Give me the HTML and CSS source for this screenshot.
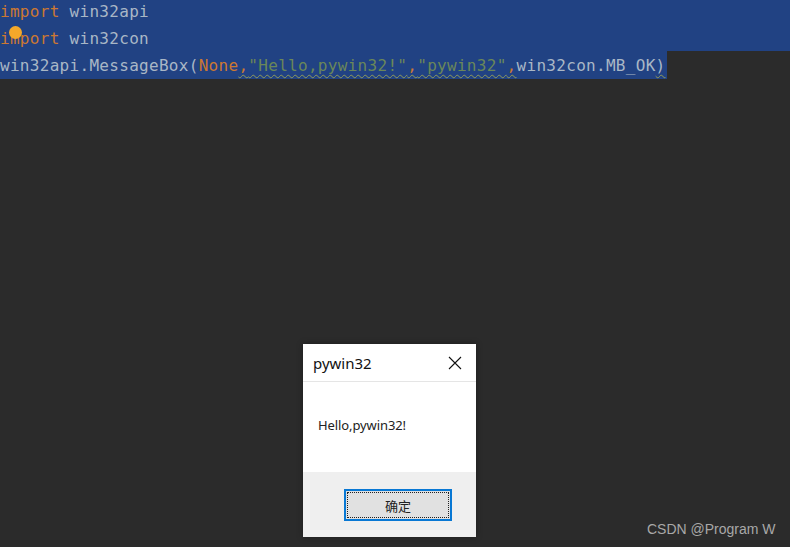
FILE: index.html
```html
<!DOCTYPE html>
<html lang="zh">
<head>
<meta charset="utf-8">
<title>pywin32</title>
<link rel="stylesheet" href="styles.css">
</head>
<body>
<main class="editor">
  <div class="line line-full"><span class="kw">import</span> win32api</div>
  <div class="line line-full line-second"><span class="kw">import</span> win32con<span class="bulb"></span></div>
  <div class="line line-fit"><span>win32api.MessageBox(</span><span class="kw">None</span><span class="kw warn">,</span><span class="str warn">"Hello,pywin32!"</span><span class="kw warn">,</span><span class="str warn">"pywin32"</span><span class="kw warn">,</span><span>win32con.MB_OK</span><span class="warn">)</span></div>
</main>
<section class="dialog">
  <header class="dialog-title">
    <span>pywin32</span>
    <svg class="close" width="14" height="14" viewBox="0 0 14 14"><path d="M1 1L13 13M13 1L1 13" stroke="#111" stroke-width="1.1" fill="none"/></svg>
  </header>
  <div class="dialog-body">Hello,pywin32!</div>
  <footer class="dialog-footer">
    <button class="ok" type="button"><span class="ok-inner">确定</span></button>
  </footer>
</section>
<div class="watermark">CSDN @Program W</div>
</body>
</html>
```
FILE: styles.css
```css
html, body {
  margin: 0;
  height: 100%;
  background: #2b2b2b;
  overflow: hidden;
}
.editor {
  font-family: "DejaVu Sans Mono", monospace;
  font-size: 16px;
  letter-spacing: 0.3px;
  color: #a9b7c6;
  padding-top: 0;
}
.line {
  height: 28px;
  line-height: 23px;
  background: #214283;
  white-space: pre;
  position: relative;
}
.line-full { height: 25.5px; }
.line-second { line-height: 26px; }
.line-fit { width: 667px; height: 28px; line-height: 29px; }
.kw { color: #cc7832; }
.str { color: #6a8759; }
.warn {
  text-decoration: underline wavy #8f9a5a 1px;
  text-underline-offset: 3px;
}
.bulb {
  position: absolute;
  left: 9px;
  top: 0;
  width: 13px;
  height: 13px;
  border-radius: 50%;
  background: #f4a82a;
}
.dialog {
  position: absolute;
  left: 303px;
  top: 344px;
  width: 173px;
  height: 193px;
  background: #fff;
  display: flex;
  flex-direction: column;
  font-family: "Noto Sans", "Noto Sans CJK SC", sans-serif;
  box-shadow: 0 0 6px rgba(0, 0, 0, 0.35);
}
.dialog-title {
  height: 38px;
  flex: none;
  box-sizing: border-box;
  border-bottom: 1px solid #e5e5e5;
  display: flex;
  align-items: center;
  justify-content: space-between;
  padding: 0 14px 0 10px;
  font-size: 15px;
  color: #111;
}
.dialog-body {
  flex: 1;
  padding: 34px 0 0 15px;
  font-size: 13px;
  line-height: 18px;
  letter-spacing: -0.1px;
  color: #222;
}
.dialog-footer {
  flex: none;
  height: 65px;
  background: #efefef;
  padding: 17px 0 0 41px;
  box-sizing: border-box;
}
.ok {
  display: block;
  width: 108px;
  height: 32px;
  padding: 1px;
  margin: 0;
  border: 2px solid #0878d4;
  background: #e1e1e1;
  box-sizing: border-box;
  font-family: "Noto Sans CJK SC", sans-serif;
  font-size: 13px;
  color: #222;
}
.ok-inner {
  display: flex;
  align-items: center;
  justify-content: center;
  height: 100%;
  border: 1px dotted #222;
  box-sizing: border-box;
}
.watermark {
  position: absolute;
  left: 647px;
  top: 520px;
  font-family: "Liberation Sans", sans-serif;
  font-size: 14px;
  line-height: 18px;
  color: #a8a8a8;
}
```
